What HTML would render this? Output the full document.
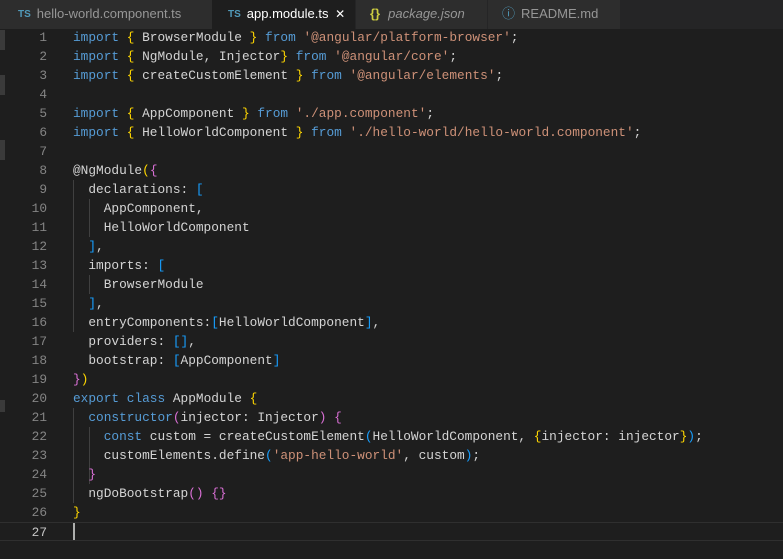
<!DOCTYPE html>
<html><head><meta charset="utf-8"><style>
*{margin:0;padding:0;box-sizing:border-box}
body{width:783px;height:559px;background:#1e1e1e;overflow:hidden;font-family:"Liberation Mono",monospace;position:relative}
.tabs{position:absolute;left:0;top:0;width:783px;height:29px;background:#252526}
.tab{position:absolute;top:0;height:29px;background:#2d2d2d;color:#969696;font:13px "Liberation Sans",sans-serif;line-height:27px;padding-left:18px;white-space:nowrap}
.tab .ts{color:#519aba;font-size:10px;font-weight:bold;margin-right:6px;vertical-align:1px}
.active{background:#1e1e1e;color:#fff}
.code{position:absolute;left:0;top:28px;width:783px}
.l{height:19px;line-height:19px;font-size:12.8px;color:#d4d4d4;white-space:pre;position:relative}
.n{position:absolute;right:736px;color:#858585;text-align:right}
.c{position:absolute;left:73px}
.k{color:#569cd6}.s{color:#ce9178}.y{color:#ffd700}.p{color:#da70d6}.b{color:#179fff}
.cur{border-top:1px solid #2f2f2f;border-bottom:1px solid #2f2f2f}
.g{position:absolute;left:0;width:5px;background:#3a3a3a}
.ig{position:absolute;width:1px;background:#404040}
</style></head><body>
<div class="tabs">
<div class="tab" style="left:0;width:212px"><span class="ts">TS</span>hello-world.component.ts</div>
<div class="tab active" style="left:212px;width:143px;padding-left:16px"><span class="ts">TS</span>app.module.ts <span style="margin-left:3px;font-size:12px">✕</span></div>
<div class="tab" style="left:356px;width:131px;padding-left:14px"><span style="color:#cbcb41;font-weight:bold;margin-right:8px">{}</span><i>package.json</i></div>
<div class="tab" style="left:488px;width:132px;padding-left:14px"><span style="color:#519aba;margin-right:6px">ⓘ</span>README.md</div>
</div>
<div class="g" style="top:30px;height:20px"></div>
<div class="g" style="top:75px;height:20px"></div>
<div class="g" style="top:140px;height:20px"></div>
<div class="g" style="top:400px;height:12px"></div>
<div class="ig" style="left:89px;top:199px;height:38px"></div>
<div class="ig" style="left:89px;top:275px;height:19px"></div>
<div class="ig" style="left:89px;top:427px;height:57px"></div>
<div class="ig" style="left:73px;top:180px;height:152px"></div>
<div class="ig" style="left:73px;top:408px;height:95px"></div>
<div class="code">
<div class="l"><span class="n">1</span><span class="c"><span class="k">import</span> <span class="y">{</span> BrowserModule <span class="y">}</span> <span class="k">from</span> <span class="s">'@angular/platform-browser'</span>;</span></div>
<div class="l"><span class="n">2</span><span class="c"><span class="k">import</span> <span class="y">{</span> NgModule, Injector<span class="y">}</span> <span class="k">from</span> <span class="s">'@angular/core'</span>;</span></div>
<div class="l"><span class="n">3</span><span class="c"><span class="k">import</span> <span class="y">{</span> createCustomElement <span class="y">}</span> <span class="k">from</span> <span class="s">'@angular/elements'</span>;</span></div>
<div class="l"><span class="n">4</span></div>
<div class="l"><span class="n">5</span><span class="c"><span class="k">import</span> <span class="y">{</span> AppComponent <span class="y">}</span> <span class="k">from</span> <span class="s">'./app.component'</span>;</span></div>
<div class="l"><span class="n">6</span><span class="c"><span class="k">import</span> <span class="y">{</span> HelloWorldComponent <span class="y">}</span> <span class="k">from</span> <span class="s">'./hello-world/hello-world.component'</span>;</span></div>
<div class="l"><span class="n">7</span></div>
<div class="l"><span class="n">8</span><span class="c">@NgModule<span class="y">(</span><span class="p">{</span></span></div>
<div class="l"><span class="n">9</span><span class="c">  declarations: <span class="b">[</span></span></div>
<div class="l"><span class="n">10</span><span class="c">    AppComponent,</span></div>
<div class="l"><span class="n">11</span><span class="c">    HelloWorldComponent</span></div>
<div class="l"><span class="n">12</span><span class="c">  <span class="b">]</span>,</span></div>
<div class="l"><span class="n">13</span><span class="c">  imports: <span class="b">[</span></span></div>
<div class="l"><span class="n">14</span><span class="c">    BrowserModule</span></div>
<div class="l"><span class="n">15</span><span class="c">  <span class="b">]</span>,</span></div>
<div class="l"><span class="n">16</span><span class="c">  entryComponents:<span class="b">[</span>HelloWorldComponent<span class="b">]</span>,</span></div>
<div class="l"><span class="n">17</span><span class="c">  providers: <span class="b">[]</span>,</span></div>
<div class="l"><span class="n">18</span><span class="c">  bootstrap: <span class="b">[</span>AppComponent<span class="b">]</span></span></div>
<div class="l"><span class="n">19</span><span class="c"><span class="p">}</span><span class="y">)</span></span></div>
<div class="l"><span class="n">20</span><span class="c"><span class="k">export</span> <span class="k">class</span> AppModule <span class="y">{</span></span></div>
<div class="l"><span class="n">21</span><span class="c">  <span class="k">constructor</span><span class="p">(</span>injector: Injector<span class="p">)</span> <span class="p">{</span></span></div>
<div class="l"><span class="n">22</span><span class="c">    <span class="k">const</span> custom = createCustomElement<span class="b">(</span>HelloWorldComponent, <span class="y">{</span>injector: injector<span class="y">}</span><span class="b">)</span>;</span></div>
<div class="l"><span class="n">23</span><span class="c">    customElements.define<span class="b">(</span><span class="s">'app-hello-world'</span>, custom<span class="b">)</span>;</span></div>
<div class="l"><span class="n">24</span><span class="c">  <span class="p">}</span></span></div>
<div class="l"><span class="n">25</span><span class="c">  ngDoBootstrap<span class="p">()</span> <span class="p">{}</span></span></div>
<div class="l"><span class="n">26</span><span class="c"><span class="y">}</span></span></div>
<div class="l cur"><span class="n" style="color:#c6c6c6">27</span><span class="c" style="border-left:2px solid #aeafad;height:17px"></span></div>
</div>
</body></html>
